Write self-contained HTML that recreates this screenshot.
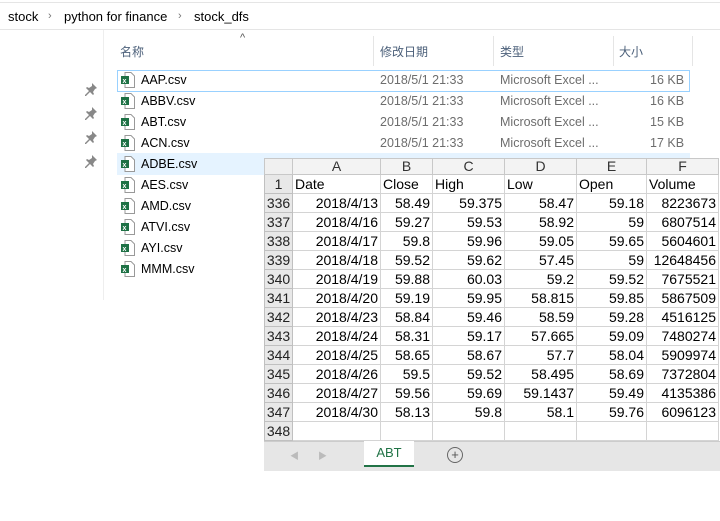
<!DOCTYPE html>
<html><head><meta charset="utf-8"><style>
body{margin:0;width:720px;height:521px;background:#fff;position:relative;overflow:hidden;font-family:"Liberation Sans","Noto Sans CJK SC",sans-serif;}
.a{position:absolute;white-space:nowrap}
.bc{font-size:13px;color:#000;top:9px}
.hd{font-size:12px;color:#4c607a;top:43px}
.fn{font-size:12.5px;color:#000}
.gr{font-size:12.5px;color:#6d6d6d}
.ic{position:absolute;width:14px;height:16px}
table{position:absolute;left:264px;top:158px;border-collapse:collapse;font-size:14px;table-layout:fixed}
td{border:1px solid #d4d4d4;height:18px;padding:0 2px;text-align:right;color:#000;overflow:hidden;line-height:18px}
tr.h td{background:#f3f3f3;text-align:center;color:#333;height:15px;line-height:15px;border-color:#c8c8c8}
td.r{background:#e8e8e8;text-align:center;color:#222;border-color:#c0c0c0;padding:0}
</style></head><body>
<div class="a" style="left:0;top:0;width:720px;height:2px;border-bottom:1px solid #e5e5e5"></div>
<div class="a bc" style="left:8px">stock</div>
<div class="a bc" style="left:48px;color:#777;font-size:11px;top:10px">›</div>
<div class="a bc" style="left:64px">python for finance</div>
<div class="a bc" style="left:178px;color:#777;font-size:11px;top:10px">›</div>
<div class="a bc" style="left:194px">stock_dfs</div>
<div class="a" style="left:0;top:29px;width:720px;border-top:1px solid #e5e5e5"></div>
<div class="a" style="left:103px;top:30px;height:270px;border-left:1px solid #eee"></div>
<div class="a" style="left:240px;top:32px;font-size:11px;color:#555">^</div>
<div class="a hd" style="left:120px">名称</div>
<div class="a hd" style="left:380px">修改日期</div>
<div class="a hd" style="left:500px">类型</div>
<div class="a hd" style="left:619px">大小</div>
<div class="a" style="left:373px;top:36px;height:30px;border-left:1px solid #e5e5e5"></div>
<div class="a" style="left:493px;top:36px;height:30px;border-left:1px solid #e5e5e5"></div>
<div class="a" style="left:613px;top:36px;height:30px;border-left:1px solid #e5e5e5"></div>
<div class="a" style="left:692px;top:36px;height:30px;border-left:1px solid #e5e5e5"></div>
<div class="a" style="left:117px;top:70px;width:571px;height:20px;border:1px solid #99d1ff"></div>
<div class="a" style="left:117px;top:153px;width:573px;height:22px;background:#e5f3ff"></div>
<svg class="a" style="left:84px;top:82px" width="14" height="90" viewBox="0 0 14 90"><g fill="#888"><g id="p"><path d="M8 1l5 5-2 1-2 3 1 2-1 1-3-3-4 4-1 0 0-1 4-4-3-3 1-1 2 1 3-2z"/></g><use href="#p" y="24"/><use href="#p" y="48"/><use href="#p" y="72"/></g></svg>
<div id="files"></div>
<table>
<colgroup><col style="width:28px"><col style="width:88px"><col style="width:52px"><col style="width:72px"><col style="width:72px"><col style="width:70px"><col style="width:72px"></colgroup>
<tr class="h"><td class="r" style="background:#f0f0f0"></td><td>A</td><td>B</td><td>C</td><td>D</td><td>E</td><td>F</td></tr>
<tr><td class="r">1</td><td style="text-align:left">Date</td><td style="text-align:left">Close</td><td style="text-align:left">High</td><td style="text-align:left">Low</td><td style="text-align:left">Open</td><td style="text-align:left">Volume</td></tr>
<tr><td class="r">336</td><td>2018/4/13</td><td>58.49</td><td>59.375</td><td>58.47</td><td>59.18</td><td>8223673</td></tr>
<tr><td class="r">337</td><td>2018/4/16</td><td>59.27</td><td>59.53</td><td>58.92</td><td>59</td><td>6807514</td></tr>
<tr><td class="r">338</td><td>2018/4/17</td><td>59.8</td><td>59.96</td><td>59.05</td><td>59.65</td><td>5604601</td></tr>
<tr><td class="r">339</td><td>2018/4/18</td><td>59.52</td><td>59.62</td><td>57.45</td><td>59</td><td>12648456</td></tr>
<tr><td class="r">340</td><td>2018/4/19</td><td>59.88</td><td>60.03</td><td>59.2</td><td>59.52</td><td>7675521</td></tr>
<tr><td class="r">341</td><td>2018/4/20</td><td>59.19</td><td>59.95</td><td>58.815</td><td>59.85</td><td>5867509</td></tr>
<tr><td class="r">342</td><td>2018/4/23</td><td>58.84</td><td>59.46</td><td>58.59</td><td>59.28</td><td>4516125</td></tr>
<tr><td class="r">343</td><td>2018/4/24</td><td>58.31</td><td>59.17</td><td>57.665</td><td>59.09</td><td>7480274</td></tr>
<tr><td class="r">344</td><td>2018/4/25</td><td>58.65</td><td>58.67</td><td>57.7</td><td>58.04</td><td>5909974</td></tr>
<tr><td class="r">345</td><td>2018/4/26</td><td>59.5</td><td>59.52</td><td>58.495</td><td>58.69</td><td>7372804</td></tr>
<tr><td class="r">346</td><td>2018/4/27</td><td>59.56</td><td>59.69</td><td>59.1437</td><td>59.49</td><td>4135386</td></tr>
<tr><td class="r">347</td><td>2018/4/30</td><td>58.13</td><td>59.8</td><td>58.1</td><td>59.76</td><td>6096123</td></tr>
<tr><td class="r">348</td><td></td><td></td><td></td><td></td><td></td><td></td></tr>
</table>
<div class="a" style="left:264px;top:441px;width:456px;height:29px;background:#e6e6e6;border-top:1px solid #ccc"></div>
<div class="a" style="left:290px;top:449px;color:#bbb;font-size:9px">◀</div>
<div class="a" style="left:318px;top:449px;color:#bbb;font-size:9px">▶</div>
<div class="a" style="left:364px;top:441px;width:50px;height:24px;background:#fff;border-bottom:2px solid #217346;color:#217346;font-size:13px;text-align:center;line-height:24px">ABT</div>
<div class="a" style="left:447px;top:447px;width:14px;height:14px;border:1px solid #666;border-radius:50%;text-align:center;line-height:14px;font-size:13px;color:#555">+</div>
<script>
var f=["AAP","ABBV","ABT","ACN","ADBE","AES","AMD","ATVI","AYI","MMM"],s=["16","16","15","17"];
var h="";f.forEach(function(n,i){var y=72+i*21;
h+='<svg class="ic" style="left:121px;top:'+y+'px" viewBox="0 0 14 16"><path d="M4 .5h6l3.5 3.5v11.5H4z" fill="#fff" stroke="#999"/><rect x="0" y="4" width="8" height="8" fill="#1e7145"/><text x="1.5" y="11" font-size="7" fill="#fff" font-family="Liberation Sans" font-weight="bold">x</text></svg>';
h+='<div class="a fn" style="left:141px;top:'+(y+1)+'px">'+n+'.csv</div>';
if(i<5){h+='<div class="a gr" style="left:380px;top:'+(y+1)+'px">2018/5/1 21:33</div><div class="a gr" style="left:500px;top:'+(y+1)+'px">Microsoft Excel ...</div>';if(i<4)h+='<div class="a gr" style="left:650px;top:'+(y+1)+'px">'+s[i]+' KB</div>';}
});document.getElementById("files").innerHTML=h;
</script>
</body></html>
